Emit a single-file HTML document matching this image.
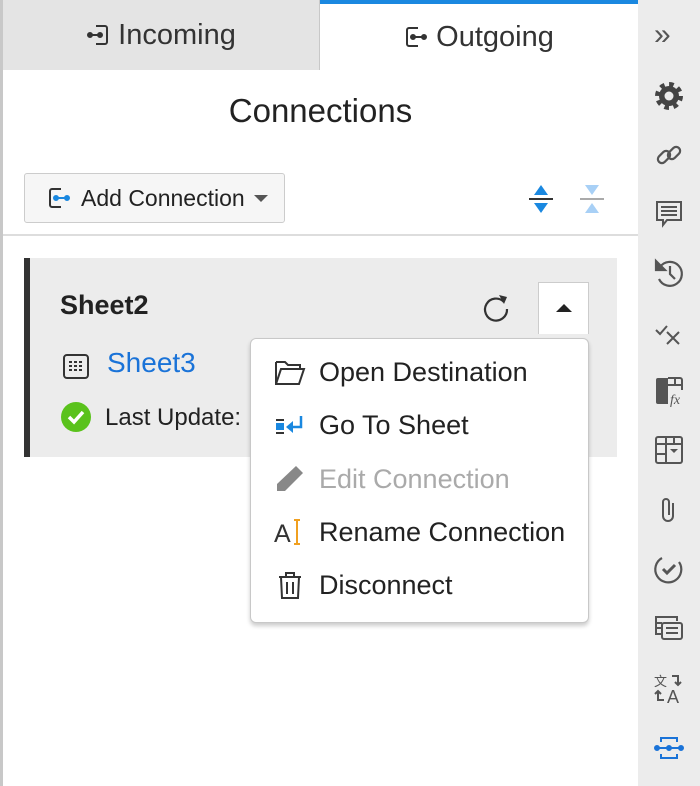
<!DOCTYPE html>
<html><head><style>
*{margin:0;padding:0;box-sizing:border-box}
body{width:700px;height:786px;background:#fff;font-family:"Liberation Sans",sans-serif;color:#222;position:relative;overflow:hidden}
.a{position:absolute}
.tab{top:0;height:70px;display:flex;align-items:center;justify-content:center;font-size:29px;color:#333;gap:8px}
.side{left:638px;top:0;width:62px;height:786px;background:#ececec}
.ic{position:absolute;left:653px;width:32px;height:32px}
.mi{position:absolute;left:274px;font-size:27px;color:#222;display:flex;align-items:center}
.mi svg{margin-right:13px}
</style></head><body>
<div class="a" style="left:0;top:0;width:3px;height:786px;background:#c8c8c8"></div>
<div class="a tab" style="left:3px;width:317px;background:#e4e4e4;border-right:1px solid #c8c8c8">
<svg width="24" height="24" viewBox="0 0 24 24" fill="none" stroke="#333" stroke-width="2"><path d="M10 3h9a2 2 0 0 1 2 2v14a2 2 0 0 1-2 2h-9M3 12h11"/><circle cx="4" cy="12" r="2" fill="#333"/><circle cx="14" cy="12" r="2" fill="#333"/></svg>Incoming</div>
<div class="a tab" style="left:320px;width:318px;background:#fff;border-top:4px solid #1a88e0">
<svg width="24" height="24" viewBox="0 0 24 24" fill="none" stroke="#333" stroke-width="2"><path d="M14 3H5a2 2 0 0 0-2 2v14a2 2 0 0 0 2 2h9M8 12h13"/><circle cx="9" cy="12" r="2" fill="#333"/><circle cx="20" cy="12" r="2" fill="#333"/></svg>Outgoing</div>
<div class="a" style="left:3px;top:92px;width:635px;text-align:center;font-size:33px;color:#222">Connections</div>
<div class="a" style="left:24px;top:173px;width:261px;height:50px;border:1px solid #ccc;border-radius:3px;background:#f6f6f6;display:flex;align-items:center;padding-left:22px;font-size:23px;color:#222">
<svg width="24" height="24" viewBox="0 0 24 24" fill="none" stroke="#333" stroke-width="2" style="margin-right:10px"><path d="M14 3H5a2 2 0 0 0-2 2v14a2 2 0 0 0 2 2h9"/><path d="M8 12h13" stroke="#1a88e0"/><circle cx="9" cy="12" r="2" fill="#1a88e0" stroke="#1a88e0"/><circle cx="20" cy="12" r="2" fill="#1a88e0" stroke="#1a88e0"/></svg>Add Connection<span style="margin-left:9px;border-left:7px solid transparent;border-right:7px solid transparent;border-top:7px solid #555;width:0;height:0"></span></div>
<svg class="a" style="left:527px;top:183px" width="28" height="32" viewBox="0 0 28 32"><path d="M14 2l7 10H7z" fill="#1a88e0"/><rect x="2" y="15" width="24" height="2" fill="#333"/><path d="M14 30l7-10H7z" fill="#1a88e0"/></svg>
<svg class="a" style="left:578px;top:183px" width="28" height="32" viewBox="0 0 28 32"><path d="M14 12l7-10H7z" fill="#a8d0f6"/><rect x="2" y="15" width="24" height="2" fill="#aaa"/><path d="M14 20l7 10H7z" fill="#a8d0f6"/></svg>
<div class="a" style="left:3px;top:234px;width:635px;height:2px;background:#ddd"></div>
<div class="a" style="left:24px;top:258px;width:593px;height:199px;background:#ececec;border-left:6px solid #333"></div>
<div class="a" style="left:60px;top:290px;font-size:27px;font-weight:bold;color:#222">Sheet2</div>
<svg class="a" style="left:480px;top:291px" width="32" height="32" viewBox="0 0 32 32" fill="none" stroke="#333" stroke-width="2.2"><path d="M24 11A11 11 0 1 0 27 18"/><path d="M19 4l8 2-3 7z" fill="#333" stroke="none"/></svg>
<div class="a" style="left:538px;top:282px;width:51px;height:52px;background:#fff;border:1px solid #ccc;border-bottom:none"></div>
<div class="a" style="left:556px;top:304px;border-left:8px solid transparent;border-right:8px solid transparent;border-bottom:8px solid #222"></div>
<svg class="a" style="left:62px;top:352px" width="28" height="28" viewBox="0 0 28 28" fill="none" stroke="#333" stroke-width="2"><rect x="2" y="3" width="24" height="23" rx="3"/><g fill="#333" stroke="none"><rect x="7" y="9" width="3" height="2"/><rect x="12" y="9" width="3" height="2"/><rect x="17" y="9" width="3" height="2"/><rect x="7" y="13" width="3" height="2"/><rect x="12" y="13" width="3" height="2"/><rect x="17" y="13" width="3" height="2"/><rect x="7" y="17" width="3" height="2"/><rect x="12" y="17" width="3" height="2"/><rect x="17" y="17" width="3" height="2"/></g></svg>
<div class="a" style="left:107px;top:347px;font-size:28px;color:#1a73d8">Sheet3</div>
<svg class="a" style="left:60px;top:401px" width="32" height="32" viewBox="0 0 32 32"><circle cx="16" cy="16" r="15" fill="#5ac21c"/><path d="M9 16l5 5 9-10" fill="none" stroke="#fff" stroke-width="3.5"/></svg>
<div class="a" style="left:105px;top:404px;font-size:24px;color:#222">Last Update:</div>
<div class="a" style="left:250px;top:338px;width:339px;height:285px;background:#fff;border:1px solid #c8c8c8;border-radius:6px;box-shadow:0 3px 4px rgba(0,0,0,.2)"></div>
<div class="mi" style="top:357px"><svg width="32" height="30" viewBox="0 0 32 30" fill="none" stroke="#333" stroke-width="2"><path d="M2 4h9l3 3h12v4M2 4v22h23l5-15H7L2 26"/></svg>Open Destination</div>
<div class="mi" style="top:410px"><svg width="32" height="30" viewBox="0 0 32 30"><rect x="2" y="12" width="8" height="7" fill="#1a88e0"/><rect x="2" y="8" width="8" height="2" fill="#333"/><rect x="2" y="21" width="8" height="2" fill="#333"/><path d="M27 5v11H14" fill="none" stroke="#1a88e0" stroke-width="2.5"/><path d="M12 16l7-6v12z" fill="#1a88e0"/></svg>Go To Sheet</div>
<div class="mi" style="top:463px;color:#aaa"><svg width="32" height="32" viewBox="0 0 32 32"><path d="M22 3l7 7L11 28H3v-7z" fill="#888"/></svg>Edit Connection</div>
<div class="mi" style="top:516px"><svg width="32" height="32" viewBox="0 0 32 32"><text x="0" y="26" font-size="25" font-family="Liberation Sans" fill="#333">A</text><path d="M20 4h6M23 4v24M20 28h6" stroke="#f0a020" stroke-width="2" fill="none"/></svg>Rename Connection</div>
<div class="mi" style="top:569px"><svg width="32" height="32" viewBox="0 0 32 32" fill="none" stroke="#333" stroke-width="2"><path d="M5 8h22M12 8V4h8v4M7 8l1 21h16l1-21M13 13v12M19 13v12"/></svg>Disconnect</div>
<div class="a side"></div>
<div class="a" style="left:654px;top:18px;font-size:30px;color:#555">»</div>
<svg class="ic" style="top:80px" viewBox="0 0 32 32"><circle cx="16" cy="16" r="11" fill="none" stroke="#444" stroke-width="6" stroke-dasharray="4.3 4.3"/><circle cx="16" cy="16" r="10" fill="#444"/><circle cx="16" cy="16" r="4.5" fill="#ececec"/></svg>
<svg class="ic" style="top:139px" viewBox="0 0 32 32" fill="none" stroke="#555" stroke-width="2.2"><rect x="4" y="14" width="14" height="8" rx="4" transform="rotate(-45 11 18)"/><rect x="14" y="10" width="14" height="8" rx="4" transform="rotate(-45 21 14)"/></svg>
<svg class="ic" style="top:198px" viewBox="0 0 32 32" fill="none" stroke="#555" stroke-width="2"><path d="M4 4h24v18H14l-4 5v-5H4z"/><path d="M8 9h16M8 13h16M8 17h16"/></svg>
<svg class="ic" style="top:257px" viewBox="0 0 32 32" fill="none" stroke="#555" stroke-width="2.2"><path d="M7 10A12 12 0 1 1 6 22"/><path d="M3 4v9h9z" fill="#555"/><path d="M17 9v8l5 5"/></svg>
<svg class="ic" style="top:316px" viewBox="0 0 32 32" fill="none" stroke="#555" stroke-width="2"><path d="M3 14l4 4 7-8M14 16l12 12M26 16L14 28"/></svg>
<svg class="ic" style="top:375px" viewBox="0 0 32 32"><path d="M5 3h10v26H5a2 2 0 0 1-2-2V5a2 2 0 0 1 2-2z" fill="#555"/><path d="M15 3h12a2 2 0 0 1 2 2v10M15 10h14M22 3v7" fill="none" stroke="#555" stroke-width="2"/><text x="17" y="29" font-size="14" font-style="italic" fill="#555" font-family="Liberation Serif">fx</text></svg>
<svg class="ic" style="top:434px" viewBox="0 0 32 32" fill="none" stroke="#555" stroke-width="2"><rect x="3" y="3" width="26" height="26" rx="2"/><path d="M3 10h26M3 20h10M13 3v26M21 3v7"/><path d="M17 15h8l-4 4z" fill="#555" stroke="none"/></svg>
<svg class="ic" style="top:494px" viewBox="0 0 32 32" fill="none" stroke="#555" stroke-width="2"><path d="M20 9v13a5 5 0 0 1-10 0V8a3 3 0 0 1 6 0v13"/></svg>
<svg class="ic" style="top:553px" viewBox="0 0 32 32" fill="none" stroke="#555" stroke-width="2.2"><path d="M26 9A13 13 0 1 1 9 5"/><path d="M10 16l4 4 8-8" stroke-width="3"/></svg>
<svg class="ic" style="top:612px" viewBox="0 0 32 32" fill="none" stroke="#555" stroke-width="2"><path d="M24 9V5H3v17h5"/><rect x="9" y="11" width="20" height="16" rx="2"/><path d="M3 11h6M3 16h6M13 16h12M13 21h12"/></svg>
<svg class="ic" style="top:672px" viewBox="0 0 32 32"><text x="1" y="14" font-size="13" fill="#555" font-family="Noto Sans CJK SC,sans-serif">文</text><text x="14" y="31" font-size="18" fill="#555" font-family="Liberation Sans">A</text><path d="M19 4h6v8M22 10l3 3 3-3M11 28H5v-8M2 22l3-3 3 3" fill="none" stroke="#555" stroke-width="2"/></svg>
<svg class="ic" style="top:732px" viewBox="0 0 32 32" fill="none" stroke="#1a73d8" stroke-width="2"><path d="M8 10V6h16v4M8 22v4h16v-4M2 16h28"/><circle cx="4" cy="16" r="2" fill="#1a73d8"/><circle cx="16" cy="16" r="2" fill="#1a73d8"/><circle cx="28" cy="16" r="2" fill="#1a73d8"/></svg>
</body></html>
